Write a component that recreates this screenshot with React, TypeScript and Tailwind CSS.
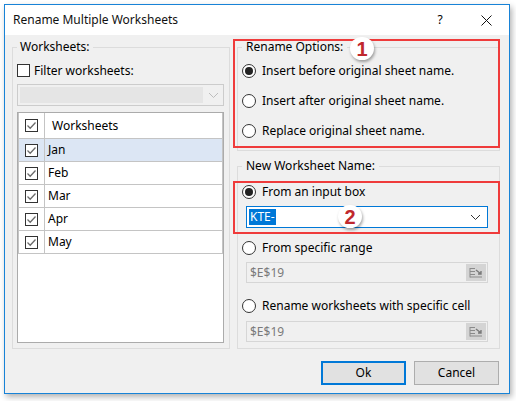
import React from 'react';

const sheets = ['Jan', 'Feb', 'Mar', 'Apr', 'May'];

function Check({ checked }: { checked?: boolean }) {
  return (
    <span className="w-[13px] h-[13px] border border-[#333] bg-white flex items-center justify-center shrink-0">
      {checked && (
        <svg width="11" height="11" viewBox="0 0 11 11" fill="none">
          <path d="M1.5 5.5 L4.2 8.2 L9.5 2.5" stroke="#6b6b6b" strokeWidth="1.3" />
        </svg>
      )}
    </span>
  );
}

function Radio({ checked, label }: { checked?: boolean; label: string }) {
  return (
    <div className="h-[18px] flex items-center gap-[6px]">
      <span className="w-[14px] h-[14px] rounded-full border border-[#333] bg-white flex items-center justify-center shrink-0">
        {checked && <span className="w-[8px] h-[8px] rounded-full bg-[#222]" />}
      </span>
      <span>{label}</span>
    </div>
  );
}

function Chevron({ color }: { color: string }) {
  return (
    <svg width="11" height="7" viewBox="0 0 11 7" fill="none">
      <path d="M1 1 L5.5 5.5 L10 1" stroke={color} strokeWidth="1" />
    </svg>
  );
}

function RangeInput() {
  return (
    <div className="ml-[4px] w-[242px] h-[21px] border border-[#d6d6d6] bg-[#f0f0f0] flex items-center justify-between pl-[3px] pr-[1px]">
      <span className="text-[#7a7a7a]">$E$19</span>
      <span className="w-[20px] h-[17px] bg-[#d4d4d4] flex items-center justify-center">
        <svg width="14" height="11" viewBox="0 0 14 11" fill="none">
          <path d="M1 1.5 H6 M1 4.5 H6 M1 7.5 H6 M1 10 H13 M1 1 V10.5" stroke="#8a8a8a" strokeWidth="1" />
          <path d="M7 3 L12 7 M9 7 H12 V4" stroke="#7a7a7a" strokeWidth="1.4" />
        </svg>
      </span>
    </div>
  );
}

function Badge({ n, className }: { n: string; className: string }) {
  return (
    <div
      className={`absolute w-[24px] h-[23px] rounded-full bg-white shadow-[1px_2px_3px_rgba(0,0,0,0.35)] flex items-center justify-center text-[#c0282d] text-[20px] font-bold leading-none font-['Liberation_Sans',sans-serif] ${className}`}
    >
      {n}
    </div>
  );
}

export default function App() {
  return (
    <div className="relative w-[516px] h-[401px] bg-white pt-[4px] pl-[4px] text-[12px] leading-[16px] text-black font-['Segoe_UI','Noto_Sans',sans-serif] overflow-hidden">
      <div className="w-[506px] h-[390px] border border-[#1883d7] flex flex-col shadow-[2px_3px_6px_rgba(0,0,0,0.3)]">
        {/* title bar */}
        <div className="h-[30px] bg-white flex items-center pl-[8px] shrink-0">
          <span className="flex-1 text-[#111]">Rename Multiple Worksheets</span>
          <span className="w-[12px] text-center mr-[35px]">?</span>
          <span className="mr-[17px] flex items-center">
            <svg width="11" height="11" viewBox="0 0 11 11">
              <path d="M0.5 0.5 L10.5 10.5 M10.5 0.5 L0.5 10.5" stroke="#111" strokeWidth="1" />
            </svg>
          </span>
        </div>

        {/* body */}
        <div className="flex-1 bg-[#f0f0f0] pt-[4px] pl-[7px] pr-[9px] flex flex-col">
          <div className="flex gap-[7px]">
            {/* left group */}
            <fieldset className="w-[218px] h-[310px] border border-[#dcdcdc] px-[4px]">
              <legend className="px-[3px]">Worksheets:</legend>
              <div className="mt-[7px] h-[17px] flex items-center gap-[4px]">
                <Check />
                <span>Filter worksheets:</span>
              </div>
              <div className="mt-[5px] w-[207px] h-[22px] border border-[#cccccc] bg-[#f0f0f0] flex items-center pl-[2px] pr-[4px] gap-[5px]">
                <div className="flex-1 h-[16px] bg-[#e5e5e5]" />
                <Chevron color="#bdbdbd" />
              </div>
              <div className="mt-[6px] w-[207px] h-[231px] border border-[#ababab] bg-white">
                <div className="w-[205px] border-r border-[#c4c4c4]">
                  <div className="h-[26px] flex border-b border-l border-[#c4c4c4]">
                    <div className="w-[26px] border-r border-[#c4c4c4] flex items-center justify-center">
                      <Check checked />
                    </div>
                    <div className="flex items-center pl-[7px]">Worksheets</div>
                  </div>
                  {sheets.map((s, i) => (
                    <div
                      key={s}
                      className={`h-[23px] flex border-b border-l border-[#c4c4c4] ${i === 0 ? 'bg-[#dce6f4]' : ''}`}
                    >
                      <div className="w-[26px] border-r border-[#c4c4c4] flex items-center justify-center">
                        <Check checked />
                      </div>
                      <div className="flex items-center pl-[3px]">{s}</div>
                    </div>
                  ))}
                </div>
              </div>
            </fieldset>

            {/* right column */}
            <div className="w-[263px] flex flex-col">
              <fieldset className="h-[112px] border border-[#dcdcdc] px-[4px]">
                <legend className="px-[4px]">Rename Options:</legend>
                <div className="mt-[7px] flex flex-col gap-[12px]">
                  <Radio checked label="Insert before original sheet name." />
                  <Radio label="Insert after original sheet name." />
                  <Radio label="Replace original sheet name." />
                </div>
              </fieldset>
              <fieldset className="mt-[7px] h-[191px] border border-[#dcdcdc] px-[4px]">
                <legend className="px-[4px]">New Worksheet Name:</legend>
                <div className="mt-[9px]">
                  <Radio checked label="From an input box" />
                </div>
                <div className="mt-[5px] ml-[4px] w-[242px] h-[22px] border border-[#0078d7] bg-white flex items-center justify-between pl-[2px] pr-[6px]">
                  <span className="bg-[#0078d7] text-white px-[1px]">KTE-</span>
                  <Chevron color="#333" />
                </div>
                <div className="mt-[11px]">
                  <Radio label="From specific range" />
                </div>
                <div className="mt-[5px]">
                  <RangeInput />
                </div>
                <div className="mt-[14px]">
                  <Radio label="Rename worksheets with specific cell" />
                </div>
                <div className="mt-[6px]">
                  <RangeInput />
                </div>
              </fieldset>
            </div>
          </div>

          {/* buttons */}
          <div className="mt-[12px] flex justify-end gap-[8px] pr-[1px]">
            <button className="w-[85px] h-[24px] border-2 border-[#0078d7] bg-[#e1e1e1]">Ok</button>
            <button className="w-[85px] h-[24px] border border-[#adadad] bg-[#e1e1e1]">Cancel</button>
          </div>
        </div>
      </div>

      {/* annotations */}
      <div className="absolute left-[233px] top-[39px] w-[267px] h-[109px] border-2 border-[#ef3b3b]" />
      <div className="absolute left-[233px] top-[181px] w-[267px] h-[53px] border-2 border-[#ef3b3b]" />
      <Badge n="1" className="left-[350px] top-[37px]" />
      <Badge n="2" className="left-[338px] top-[205px]" />
    </div>
  );
}
